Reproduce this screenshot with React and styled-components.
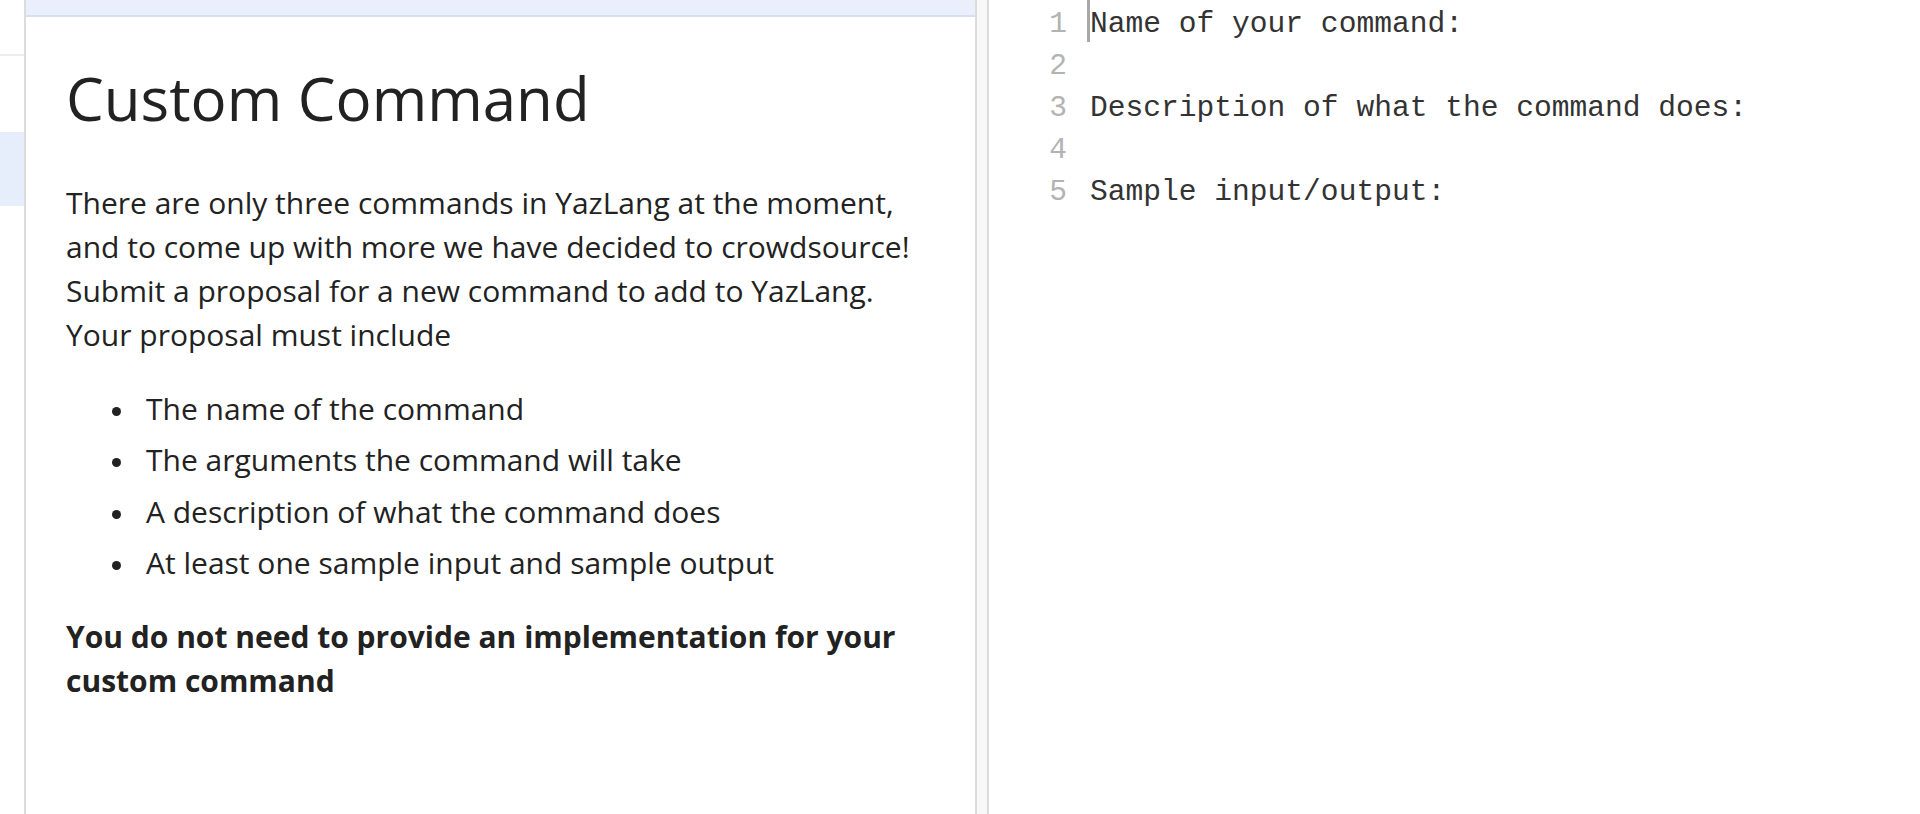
import React from 'react';
import styled, { createGlobalStyle } from 'styled-components';

const GlobalStyle = createGlobalStyle`
  html, body {
    margin: 0;
    padding: 0;
    background: #fff;
    overflow: hidden;
  }
  * {
    box-sizing: border-box;
  }
`;

const Layout = styled.div`
  display: flex;
  height: 100vh;
  font-family: "Open Sans", "Noto Sans", sans-serif;
  color: #222;
`;

const Sidebar = styled.aside`
  width: 26px;
  flex-shrink: 0;
  border-right: 2px solid #dcdcdc;
  display: flex;
  flex-direction: column;
`;

const SidebarHeader = styled.div`
  height: 56px;
  border-bottom: 2px solid #ececec;
`;

const SidebarItem = styled.div`
  height: 74px;
  margin-top: 76px;
  background: ${props => (props.active ? '#e5eefa' : 'transparent')};
`;

const Panel = styled.section`
  width: 951px;
  flex-shrink: 0;
  border-right: 2px solid #dcdcdc;
  display: flex;
  flex-direction: column;
`;

const PanelTop = styled.div`
  height: 17px;
  background: #eaeffb;
  border-bottom: 2px solid #d7dff2;
`;

const PanelBody = styled.div`
  padding: 43px 38px 0 40px;
`;

const Title = styled.h1`
  margin: 0;
  font-size: 60px;
  font-weight: 400;
  line-height: 77px;
  color: #222;
`;

const Text = styled.p`
  margin: ${props => (props.bold ? '30px' : '44px')} 0 0;
  font-size: 30px;
  line-height: 44px;
  font-weight: ${props => (props.bold ? 700 : 400)};
`;

const List = styled.ul`
  margin: 30px 0 0;
  padding-left: 85px;
  list-style: none;
  font-size: 30px;
  line-height: 44px;
`;

const Item = styled.li`
  display: flex;
  margin-bottom: 7.3px;

  &::before {
    content: '';
    flex-shrink: 0;
    width: 9px;
    height: 9px;
    margin: 20px 25px 0 -39px;
    border-radius: 50%;
    background: #222;
  }

  &:last-child {
    margin-bottom: 0;
  }
`;

const Splitter = styled.div`
  width: 12px;
  flex-shrink: 0;
  background: #f8f8f8;
  border-right: 2px solid #dcdcdc;
`;

const Editor = styled.section`
  flex: 1;
  display: flex;
  padding-top: 3px;
  font-family: "Liberation Mono", "DejaVu Sans Mono", monospace;
  font-size: 29.6px;
  line-height: 42px;
`;

const Gutter = styled.div`
  width: 78px;
  text-align: right;
  color: #b3b3b3;
`;

const Code = styled.div`
  flex: 1;
  padding-left: 23px;
  color: #333;
  white-space: pre;
`;

const Line = styled.div`
  height: 42px;
`;

const Caret = styled.span`
  display: inline-block;
  width: 3px;
  height: 42px;
  margin: -3px 0 0 -3px;
  vertical-align: top;
  background: #a8a8a8;
`;

const lines = [
  'Name of your command:',
  '',
  'Description of what the command does:',
  '',
  'Sample input/output:',
];

const items = [
  'The name of the command',
  'The arguments the command will take',
  'A description of what the command does',
  'At least one sample input and sample output',
];

export default function App() {
  return (
    <>
      <GlobalStyle />
      <Layout>
        <Sidebar>
          <SidebarHeader />
          <SidebarItem active />
        </Sidebar>
        <Panel>
          <PanelTop />
          <PanelBody>
            <Title>Custom Command</Title>
            <Text>
              There are only three commands in YazLang at the moment, and to come up
              with more we have decided to crowdsource! Submit a proposal for a new
              command to add to YazLang. Your proposal must include
            </Text>
            <List>
              {items.map(item => (
                <Item key={item}>{item}</Item>
              ))}
            </List>
            <Text bold>
              You do not need to provide an implementation for your custom command
            </Text>
          </PanelBody>
        </Panel>
        <Splitter />
        <Editor>
          <Gutter>
            {lines.map((_, i) => (
              <Line key={i}>{i + 1}</Line>
            ))}
          </Gutter>
          <Code>
            {lines.map((line, i) => (
              <Line key={i}>
                {i === 0 && <Caret />}
                {line}
              </Line>
            ))}
          </Code>
        </Editor>
      </Layout>
    </>
  );
}
